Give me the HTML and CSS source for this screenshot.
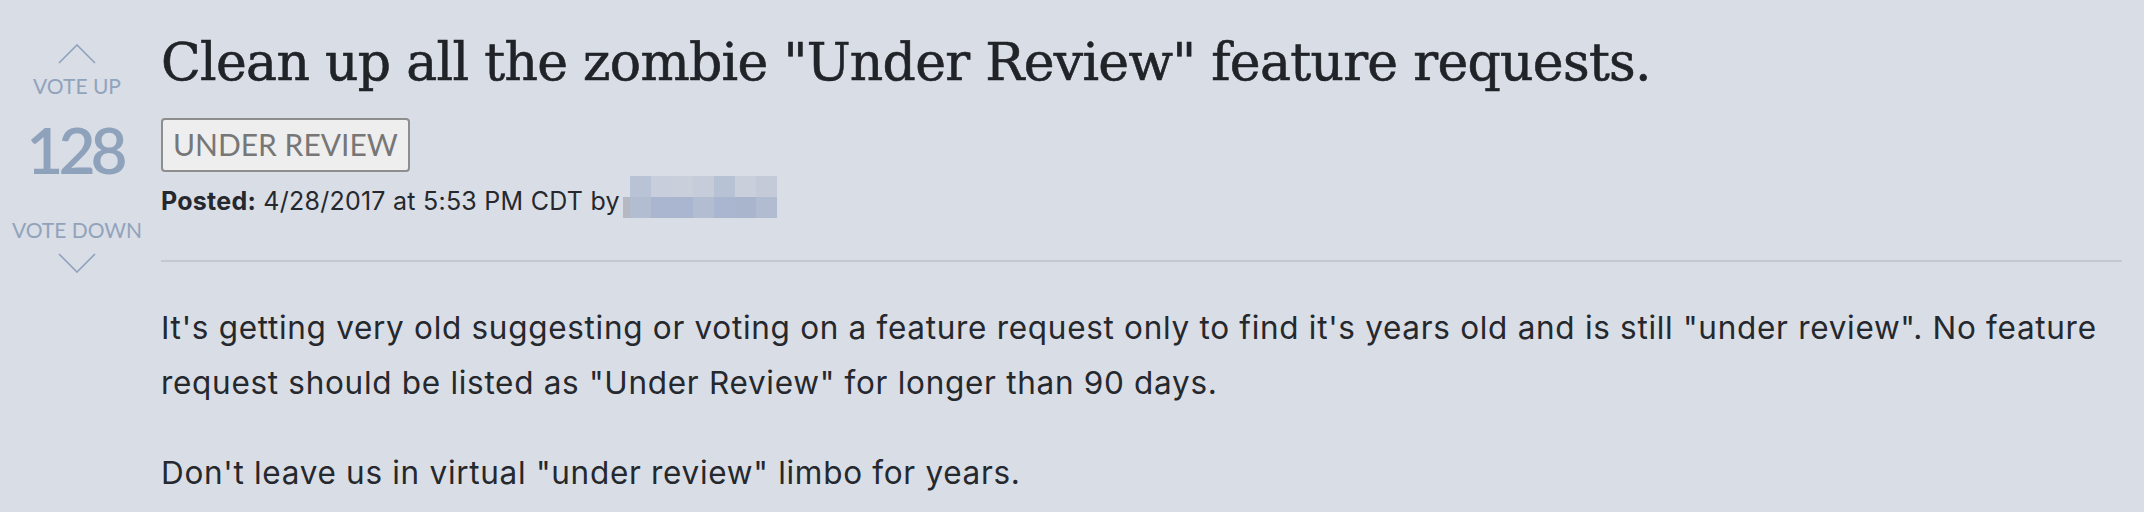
FILE: index.html
```html
<!DOCTYPE html>
<html lang="en">
<head>
<meta charset="utf-8">
<title>Clean up all the zombie "Under Review" feature requests.</title>
<link rel="stylesheet" href="styles.css">
</head>
<body>
<div class="post">
  <div class="vote">
    <svg class="chev" width="38" height="20" viewBox="0 0 38 20" aria-hidden="true"><polyline points="1,19 19,1 37,19" fill="none" stroke="#8fa2bb" stroke-width="1.6"/></svg>
    <span class="vote-label vote-up">VOTE UP</span>
    <span class="vote-count">128</span>
    <span class="vote-label vote-down">VOTE DOWN</span>
    <svg class="chev chev-down" width="38" height="20" viewBox="0 0 38 20" aria-hidden="true"><polyline points="1,1 19,19 37,1" fill="none" stroke="#8fa2bb" stroke-width="1.6"/></svg>
  </div>
  <div class="main">
    <h1 class="title">Clean up all the zombie "Under Review" feature requests.</h1>
    <span class="badge">UNDER REVIEW</span>
    <div class="posted"><b>Posted:</b> 4/28/2017 at 5:53 PM CDT by<span class="user" aria-label="hidden user"></span></div>
    <hr class="sep">
    <p class="body">It's getting very old suggesting or voting on a feature request only to find it's years old and is still "under review". No feature request should be listed as "Under Review" for longer than 90 days.</p>
    <p class="body">Don't leave us in virtual "under review" limbo for years.</p>
  </div>
</div>
</body>
</html>
```
FILE: styles.css
```css
html, body {
  margin: 0;
  padding: 0;
}
body {
  background: #d9dde6;
  font-family: Inter, Lato, "Noto Sans", sans-serif;
  color: #25282d;
}
.post {
  display: flex;
  padding-right: 22px;
}
.vote {
  flex: none;
  width: 154px;
  display: flex;
  flex-direction: column;
  align-items: center;
  padding-top: 44px;
  color: #8fa2bb;
  font-family: Lato, "Noto Sans", sans-serif;
}
.chev {
  display: block;
}
.vote-label {
  display: block;
  font-size: 21px;
  line-height: 26px;
  color: #91a3bb;
}
.vote-up {
  margin-top: 9px;
}
.vote-count {
  display: block;
  font-size: 64px;
  font-weight: 600;
  line-height: 64px;
  letter-spacing: -5px;
  margin: 19px 5px 0 0;
  color: #8fa2bb;
}
.vote-down {
  margin-top: 35px;
}
.chev-down {
  margin-top: 10px;
}
.main {
  flex: 1;
  min-width: 0;
  margin-left: 7px;
  padding-top: 30px;
}
.title {
  margin: 0;
  font-family: "DejaVu Serif", "Liberation Serif", serif;
  font-weight: normal;
  font-size: 52px;
  line-height: 64px;
  letter-spacing: -0.7px;
  color: #202327;
  -webkit-text-stroke: 0.6px #202327;
  white-space: nowrap;
}
.badge {
  display: block;
  width: max-content;
  margin-top: 24px;
  padding: 0 10px 2px;
  border: 2px solid #8d8d8d;
  border-radius: 4px;
  background: #eeeeee;
  color: #777777;
  font-family: Lato, "Noto Sans", sans-serif;
  font-size: 30px;
  line-height: 48px;
}
.posted {
  margin-top: 4px;
  font-size: 25px;
  line-height: 36px;
  letter-spacing: 0.25px;
}
.posted b {
  font-weight: 700;
}
.user {
  display: inline-block;
  width: 154px;
  height: 42px;
  vertical-align: -8px;
  margin-left: 3px;
  background:
    linear-gradient(90deg, transparent 0 7px, #b9c3d6 7px 28px, #c8cedb 28px 49px, #c9cfdb 49px 70px, #c6ccd9 70px 91px, #b8c2d5 91px 112px, #c9cfdb 112px 133px, #c4cad8 133px 154px) top / 100% 21px no-repeat,
    linear-gradient(90deg, #b6b9bf 0 7px, #b2bdd2 7px 28px, #aab6cf 28px 49px, #aab6cf 49px 70px, #b3bdd1 70px 91px, #aab5cf 91px 112px, #a9b4cd 112px 133px, #b2bcd0 133px 154px) bottom / 100% 21px no-repeat;
}
.sep {
  border: 0;
  height: 2px;
  background: #c4c9d1;
  margin: 41px 0 0;
}
.body {
  margin: 38px 0 0;
  font-size: 31.5px;
  line-height: 55px;
  letter-spacing: 0.7px;
}
.body + .body {
  margin-top: 35px;
}
```
